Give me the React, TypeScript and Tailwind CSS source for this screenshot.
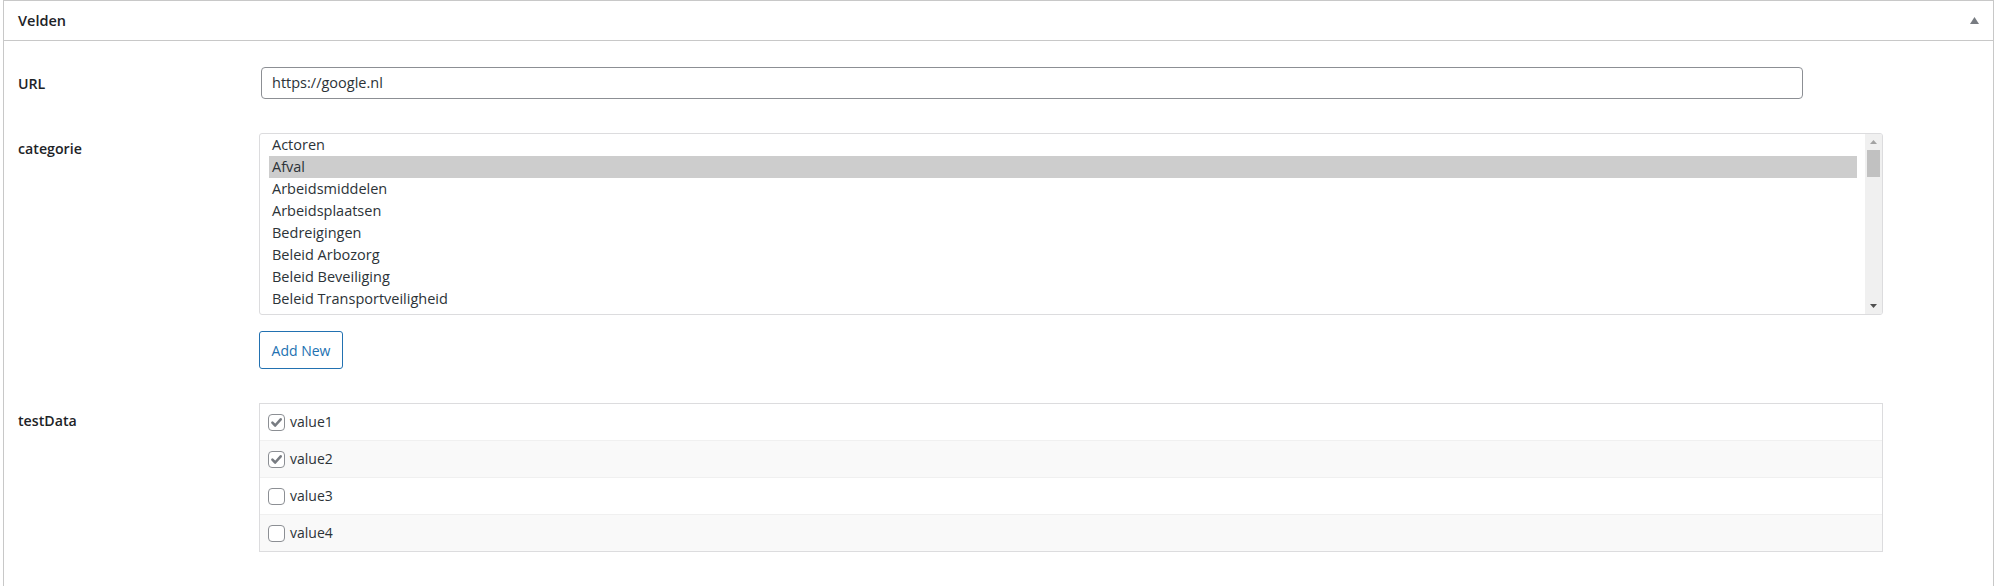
import React from "react";

const options = [
  "Actoren",
  "Afval",
  "Arbeidsmiddelen",
  "Arbeidsplaatsen",
  "Bedreigingen",
  "Beleid Arbozorg",
  "Beleid Beveiliging",
  "Beleid Transportveiligheid",
];

const checks = [
  { label: "value1", checked: true },
  { label: "value2", checked: true },
  { label: "value3", checked: false },
  { label: "value4", checked: false },
];

function Checkbox({ checked }: { checked: boolean }) {
  return (
    <span className="flex h-[17px] w-[17px] shrink-0 items-center justify-center rounded-[4px] border border-[#8c8f94] bg-white">
      {checked && (
        <svg width="13" height="13" viewBox="0 0 13 13">
          <path
            d="M2.4 6.6 L5.2 9.5 L10.7 3.3"
            fill="none"
            stroke="#787c82"
            strokeWidth="2.6"
            strokeLinecap="round"
            strokeLinejoin="round"
          />
        </svg>
      )}
    </span>
  );
}

export default function App() {
  return (
    <div className="h-[586px] w-[1995px] overflow-hidden bg-white font-['Open_Sans',sans-serif] text-[#1d2327]">
      <div className="ml-[3px] mr-[1px] h-[640px] border border-[#c8c8c8] bg-white">
        {/* header */}
        <div className="flex h-[40px] items-center justify-between border-b border-[#c8c8c8] pl-[14px] pr-[14px]">
          <span className="text-[14.5px] font-semibold leading-[20px]">Velden</span>
          <svg width="9" height="7" viewBox="0 0 9 7" className="mt-[-1px]">
            <path d="M4.5 0 L9 7 L0 7 Z" fill="#787c82" />
          </svg>
        </div>

        <div className="pl-[14px]">
          {/* URL row */}
          <div className="mt-[26px] flex">
            <div className="w-[241px] shrink-0 pt-[7px] text-[14.2px] font-semibold leading-[20px]">URL</div>
            <div className="ml-[2px] flex h-[32px] w-[1542px] items-center rounded-[4px] border border-[#8c8f94] pl-[10px] text-[14.5px] text-[#2c3338]">
              https://google.nl
            </div>
          </div>

          {/* categorie row */}
          <div className="mt-[34px] flex">
            <div className="w-[241px] shrink-0 pt-[6px] text-[14.2px] font-semibold leading-[20px]">categorie</div>
            <div className="flex flex-col">
              <div className="flex h-[182px] w-[1624px] overflow-hidden rounded-[3px] border border-[#dcdcde] bg-white">
                <div className="flex-1 pl-[9px] pr-[8px]">
                  {options.map((o, i) => (
                    <div
                      key={o}
                      className={`h-[22px] px-[3px] text-[14.5px] leading-[22px] text-[#2c3338] ${
                        i === 1 ? "bg-[#cdcdcd] text-[#1d2327]" : ""
                      }`}
                    >
                      {o}
                    </div>
                  ))}
                </div>
                {/* scrollbar */}
                <div className="flex w-[17px] shrink-0 flex-col items-center bg-[#f0f0f0]">
                  <div className="flex h-[16px] items-center justify-center">
                    <svg width="7" height="4" viewBox="0 0 7 4">
                      <path d="M3.5 0 L7 4 L0 4 Z" fill="#a3a3a3" />
                    </svg>
                  </div>
                  <div className="h-[27px] w-[13px] bg-[#c1c1c1]" />
                  <div className="flex-1" />
                  <div className="flex h-[17px] items-center justify-center">
                    <svg width="7" height="4" viewBox="0 0 7 4">
                      <path d="M0 0 L7 0 L3.5 4 Z" fill="#505050" />
                    </svg>
                  </div>
                </div>
              </div>
              <div className="mt-[16px] flex h-[38px] w-[84px] items-center justify-center rounded-[3px] border border-[#2271b1] text-[14px] text-[#2271b1]">
                Add New
              </div>
            </div>
          </div>

          {/* testData row */}
          <div className="mt-[34px] flex">
            <div className="w-[241px] shrink-0 pt-[8px] text-[14.2px] font-semibold leading-[20px]">testData</div>
            <div className="w-[1624px] border border-[#dcdcde] bg-white">
              {checks.map((c, i) => (
                <div
                  key={c.label}
                  className={`flex items-center gap-[5px] pl-[8px] ${
                    i > 0 ? "h-[37px] border-t border-[#f0f0f0]" : "h-[36px]"
                  } ${i % 2 === 1 ? "bg-[#f9f9f9]" : "bg-white"}`}
                >
                  <Checkbox checked={c.checked} />
                  <span className="text-[14px] leading-[20px] text-[#2c3338]">{c.label}</span>
                </div>
              ))}
            </div>
          </div>
        </div>
      </div>
    </div>
  );
}
